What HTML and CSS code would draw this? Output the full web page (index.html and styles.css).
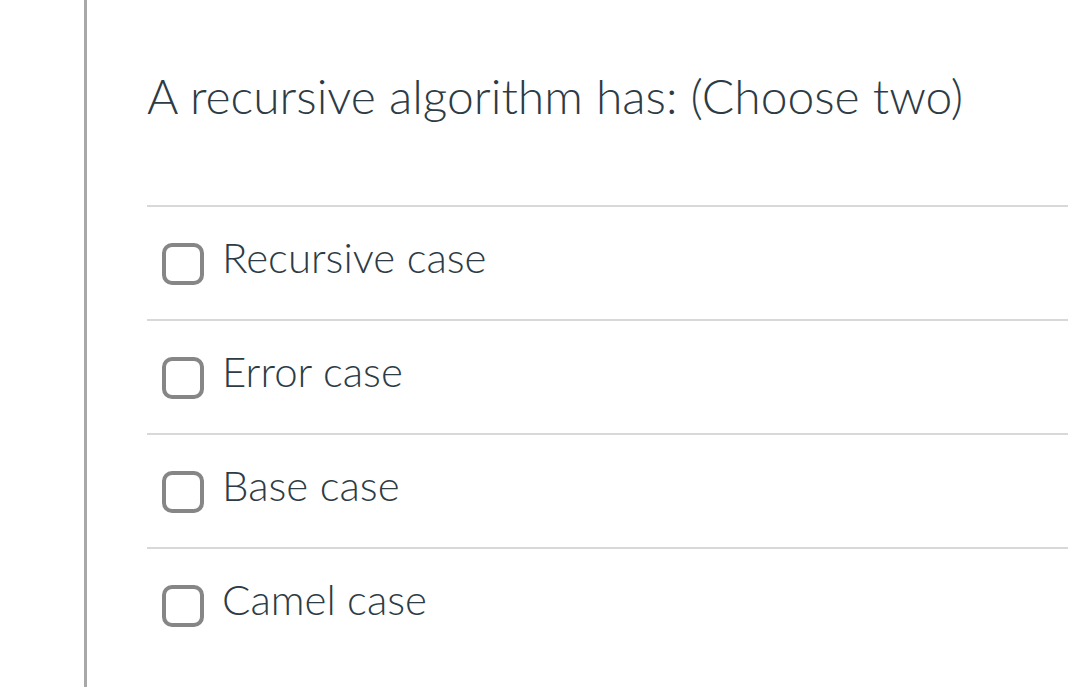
FILE: index.html
```html
<!DOCTYPE html>
<html>
<head>
<meta charset="utf-8">
<link rel="stylesheet" href="styles.css">
</head>
<body>
<div class="page">
  <div class="question">
    <h1 class="title">A recursive algorithm has: (Choose two)</h1>
    <ul class="answers">
      <li class="answer"><span class="box"></span><span class="label">Recursive case</span></li>
      <li class="answer"><span class="box"></span><span class="label">Error case</span></li>
      <li class="answer"><span class="box"></span><span class="label">Base case</span></li>
      <li class="answer"><span class="box"></span><span class="label">Camel case</span></li>
    </ul>
  </div>
</div>
</body>
</html>
```
FILE: styles.css
```css
html, body {
  margin: 0;
  padding: 0;
  background: #ffffff;
}
body {
  font-family: "Lato Light", Lato, "Open Sans", sans-serif;
  color: #2d3b45;
  width: 1068px;
  height: 687px;
  overflow: hidden;
}
.page {
  margin-left: 84px;
  border-left: 3px solid #a8a8a8;
  height: 687px;
  padding-left: 60px;
}
.question {
  padding-top: 64px;
}
.title {
  margin: 0;
  font-weight: 300;
  font-size: 48px;
  line-height: 64px;
  padding-bottom: 77px;
}
.answers {
  list-style: none;
  margin: 0;
  padding: 0;
}
.answer {
  display: flex;
  align-items: center;
  height: 112px;
  border-top: 2px solid #d8d8d8;
  padding-left: 15px;
}
.box {
  box-sizing: border-box;
  width: 42px;
  height: 42px;
  border: 4px solid #868686;
  border-radius: 10px;
  margin-right: 18px;
  margin-top: 2px;
  flex: none;
}
.label {
  font-weight: 300;
  font-size: 42px;
  line-height: 50px;
  margin-bottom: 12px;
}
```
